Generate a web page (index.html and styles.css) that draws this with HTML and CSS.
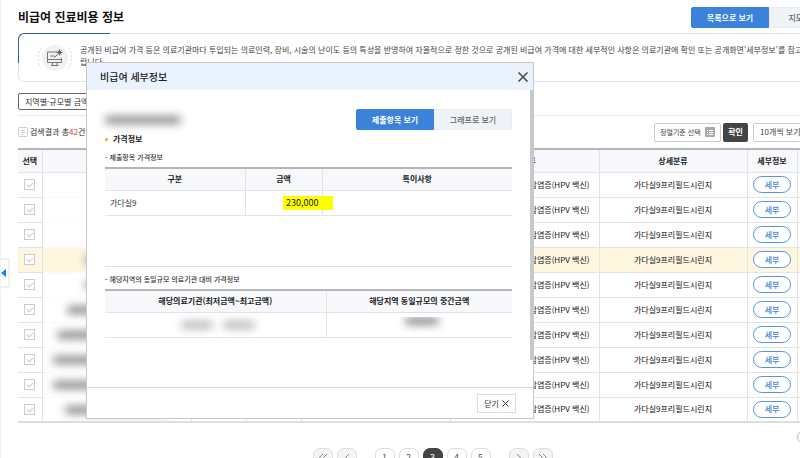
FILE: index.html
```html
<!DOCTYPE html>
<html lang="ko">
<head>
<meta charset="utf-8">
<title>비급여 진료비용 정보</title>
<link rel="stylesheet" href="styles.css">
</head>
<body>
<button class="drawer" type="button" aria-label="메뉴 열기"><svg width="5" height="8" viewBox="0 0 5 8"><path d="M5 0v8L0 4z" fill="#0a84ff"/></svg></button>
<main class="page">
  <header class="head">
    <h1>비급여 진료비용 정보</h1>
    <div class="tabs"><button class="tab on" type="button">목록으로 보기</button><button class="tab" type="button">지도로 보기</button></div>
  </header>

  <section class="notice">
    <svg class="notice-icon" width="36" height="28" viewBox="0 0 36 28" fill="none">
      <circle cx="18" cy="14" r="13" fill="#f1f1f1"/>
      <path d="M4.500 4A17 17 0 0 0 4.500 24M31.500 4A17 17 0 0 1 31.500 24" stroke="#d5d5d5" stroke-dasharray="2 2"/>
      <path d="M20 8h-9.500v10.500h14V14M11 15.500h13.500M15.500 19v2.500h4.500V19M14 21.500h7.500M13 12h5" stroke="#777"/>
      <path d="M22.500 5.500v6M19.500 8.500h6M20.500 6.500l4 4M24.500 6.500l-4 4M20.500 10.500l-3 3" stroke="#666"/>
    </svg>
    <p>공개된 비급여 가격 등은 의료기관마다 투입되는 의료인력, 장비, 시술의 난이도 등의 특성을 반영하여 자율적으로 정한 것으로 공개된 비급여 가격에 대한 세부적인 사항은 의료기관에 확인 또는 공개화면'세부정보'를 참고하시기 바<br>랍니다.</p>
  </section>

  <div class="region"><button class="region-btn" type="button">지역별·규모별 금액</button></div>

  <div class="toolbar">
    <svg width="10" height="10" viewBox="0 0 10 10" fill="none" stroke="#ccc"><rect x=".5" y=".5" width="9" height="9" rx="1"/><path d="M3 3.500h4M3 5.500h4M3 7.500h2"/></svg>
    <p class="count">검색결과 총<em>42</em>건</p>
    <label class="pick sort">
      <select aria-label="정렬기준"><option>정렬기준 선택</option></select>
      <svg width="10" height="10" viewBox="0 0 10 10"><rect width="10" height="10" rx="1" fill="#aaa"/><path d="M2 3.500h1M4 3.500h4M2 5.500h1M4 5.500h4M2 7.500h1M4 7.500h4" stroke="#fff"/></svg>
    </label>
    <button class="ok" type="button">확인</button>
    <label class="pick per"><select aria-label="페이지당 개수"><option>10개씩 보기</option></select></label>
  </div>

  <table class="list">
    <colgroup><col class="c-check"><col class="c-name"><col class="c-a"><col class="c-a"><col class="c-name"><col class="c-name"><col class="c-item"><col class="c-btn"><col></colgroup>
    <thead><tr><th>선택</th><th></th><th></th><th></th><th></th><th>중분류</th><th>상세분류</th><th>세부정보</th><th></th></tr></thead>
    <tbody id="rows"></tbody>
  </table>

  <div class="foot">
    <nav class="pager" aria-label="페이지">
      <a class="arrow" href="#" aria-label="처음"><svg width="10" height="8" viewBox="0 0 10 8"><path d="M5 0L1 4l4 4M9 0L5 4l4 4"/></svg></a>
      <a class="arrow gap" href="#" aria-label="이전"><svg width="6" height="8" viewBox="0 0 6 8"><path d="M5 0L1 4l4 4"/></svg></a>
      <a href="#">1</a><a href="#">2</a><a class="now" href="#">3</a><a href="#">4</a><a class="gap" href="#">5</a>
      <a class="arrow" href="#" aria-label="다음"><svg width="6" height="8" viewBox="0 0 6 8"><path d="M1 0l4 4-4 4"/></svg></a>
      <a class="arrow" href="#" aria-label="마지막"><svg width="10" height="8" viewBox="0 0 10 8"><path d="M1 0l4 4-4 4M5 0l4 4-4 4"/></svg></a>
    </nav>
    <button class="round" type="button" aria-label="위로"></button>
  </div>
</main>

<section class="modal" role="dialog" aria-label="비급여 세부정보">
  <header class="modal-head">
    <h2>비급여 세부정보</h2>
    <button class="x" type="button" aria-label="닫기"><svg width="10" height="10" viewBox="0 0 10 10" fill="none" stroke="#444" stroke-width="1.500"><path d="M.5.500l9 9M9.500.500l-9 9"/></svg></button>
  </header>
  <div class="modal-body">
    <div class="modal-top">
      <span class="smudge hospital"></span>
      <div class="tabs"><button class="tab on" type="button">제출항목 보기</button><button class="tab" type="button">그래프로 보기</button></div>
    </div>
    <h3>가격정보</h3>
    <h4>- 제출항목 가격정보</h4>
    <div class="price-box">
      <table class="price">
        <colgroup><col class="p-kind"><col class="p-cost"><col></colgroup>
        <thead><tr><th>구분</th><th>금액</th><th>특이사항</th></tr></thead>
        <tbody><tr><td>가다실9</td><td class="num"><mark>230,000</mark></td><td></td></tr></tbody>
      </table>
    </div>
    <h4>- 해당지역의 동일규모 의료기관 대비 가격정보</h4>
    <table class="price compare">
      <colgroup><col class="p-range"><col></colgroup>
      <thead><tr><th>해당의료기관(최저금액~최고금액)</th><th>해당지역 동일규모의 중간금액</th></tr></thead>
      <tbody><tr><td><div class="range"><span class="smudge"></span><span class="smudge"></span></div></td><td><div class="middle"><span class="smudge"></span></div></td></tr></tbody>
    </table>
  </div>
  <footer class="modal-foot"><button class="close" type="button">닫기<svg width="7" height="7" viewBox="0 0 7 7" fill="none" stroke="#333"><path d="M.5.500l6 6M6.500.500l-6 6"/></svg></button></footer>
</section>
<script src="rows.js"></script>
</body>
</html>
```
FILE: rows.js
```js
// Width of the masked hospital name in each result row
const names = [0, 0, 0, 64, 64, 100, 120, 128, 128, 104];
document.getElementById('rows').innerHTML = names.map((w, i) => `
  <tr class="${i === 3 ? 'picked' : ''}">
    <td><input type="checkbox" aria-label="${i + 1}번 선택"></td>
    <td class="masked"><span class="smudge" style="width:${w}px"></span></td>
    <td></td><td></td><td></td>
    <td class="mid">바이러스 감염증(HPV 백신)</td>
    <td>가다실9프리필드시린지</td>
    <td><button class="detail" type="button">세부</button></td>
    <td></td>
  </tr>`).join('');
```
FILE: styles.css
```css
* { box-sizing: border-box; }
html { overflow: hidden; }
body {
  margin: 0;
  min-height: 100vh;
  position: relative;
  overflow: hidden;
  border-left: 1px solid #f3f3f3;
  background: #fff;
  color: #333;
  font: 9px/12px "Noto Sans CJK KR", sans-serif;
}
button, select, input { font: inherit; color: inherit; margin: 0; padding: 0; }
h1, h2, h3, h4, p { margin: 0; }
table { width: 100%; border-collapse: collapse; table-layout: fixed; }
th, td { padding: 0; }

/* The page runs past the right edge of the window */
.page { margin: 0 -47px 0 17px; }

.drawer {
  position: absolute;
  left: -1px;
  top: 259px;
  width: 9px;
  height: 28px;
  display: flex;
  align-items: center;
  border: 1px solid #eee;
  background: #fff;
  box-shadow: 0 0 2px #ddd;
}

.head { display: flex; justify-content: space-between; padding-top: 7px; height: 33px; }
.head h1 { font-size: 12px; line-height: 20px; color: #111; }
.tabs { display: flex; }
.tab {
  width: 78px;
  height: 21px;
  border: 1px solid #e8edf1;
  border-radius: 0 2px 2px 0;
  background: #eff3f7;
  color: #666;
  font-size: 8px;
  font-weight: 500;
}
.tab.on { border-color: #3a82da; border-radius: 2px 0 0 2px; background: #3a82da; color: #fff; font-weight: 700; }

.notice {
  position: relative;
  display: flex;
  gap: 7px;
  height: 49px;
  padding: 10px 0 0 18px;
  border: 1px solid #dfe2e8;
  border-radius: 6px;
}
.notice::before {
  content: "";
  position: absolute;
  left: -1px;
  top: -1px;
  width: 91px;
  height: 29px;
  border: solid #3c5a94;
  border-width: 1px 0 0 1px;
  border-top-left-radius: 6px;
}
.notice-icon { flex: none; }
.notice p { font-size: 8px; line-height: 12px; color: #444; white-space: nowrap; }

.region { height: 34px; padding-top: 11px; border-bottom: 1px solid #e8e8e8; }
.region-btn { display: block; width: 88px; height: 17px; padding: 0 6px; border: 1px solid #667; border-radius: 2px; background: #fff; font-size: 8px; line-height: 12px; text-align: left; white-space: nowrap; }

.toolbar { display: flex; align-items: center; height: 32px; }
.count { margin: 0 auto 0 2px; font-size: 8px; }
.count em { color: #e0403c; font-style: normal; }
.pick { display: flex; align-items: center; height: 19px; border: 1px solid #ccc; border-radius: 2px; background: #fff; font-size: 8px; }
.pick select { appearance: none; border: 0; background: none; color: #444; }
.sort { width: 67px; padding: 0 5px; justify-content: space-between; font-size: 7px; }
.per { width: 94px; padding: 0 6px; }
.ok { width: 25px; height: 19px; margin: 0 5px 0 2px; border: 0; border-radius: 2px; background: #444; color: #fff; font-size: 8px; font-weight: 700; }

.list { border-top: 2px solid #b5b5b5; border-bottom: 2px solid #ddd; color: #111; font-size: 8px; }
.c-check { width: 24px; }
.c-name { width: 149px; }
.c-a { width: 55px; }
.c-item { width: 148px; }
.c-btn { width: 50px; }
.list tr { height: 25px; }
.list thead tr { height: 23px; }
.list th { background: #f6f8fb; color: #222; }
.list th, .list td { border-bottom: 1px solid #e3e3e3; border-right: 1px solid #e3e3e3; text-align: center; white-space: nowrap; overflow: hidden; }
.list .masked { border-bottom-color: #fafafa; }
.list .mid { padding-right: 9px; text-align: right; }
.list .picked td { background: #fff6df; }
.list input {
  appearance: none;
  display: block;
  width: 11px;
  height: 11px;
  margin: 0 auto;
  border: 1px solid #ccc;
  background: #fff;
}
.list input::after {
  content: "";
  display: block;
  width: 5px;
  height: 3px;
  margin: 2px;
  border: solid #ccc;
  border-width: 0 0 1px 1px;
  transform: rotate(-45deg);
}
.detail { width: 38px; height: 17px; border: 1px solid #5592e4; border-radius: 9px; background: #fff; color: #3d80dc; font-weight: 500; line-height: 12px; }

.smudge { display: inline-block; height: 8px; border-radius: 4px; background: #8c8c90; filter: blur(4px); vertical-align: middle; }

.foot { position: relative; padding-top: 25px; }
.pager { display: flex; justify-content: center; gap: 4px; }
.pager a {
  display: flex;
  align-items: center;
  justify-content: center;
  width: 20px;
  height: 20px;
  border: 1px solid #ddd;
  border-radius: 7px;
  color: #555;
  text-decoration: none;
}
.pager .arrow { background: #f5f5f5; }
.pager .now { border-color: #444; background: #444; color: #fff; }
.pager .gap { margin-right: 14px; }
.pager svg { fill: none; stroke: #888; }
.round { position: absolute; right: 36px; top: 7px; width: 14px; height: 14px; border: 1px solid #bbb; border-radius: 50%; background: #fff; }

.modal {
  position: absolute;
  left: 85px;
  top: 62px;
  width: 448px;
  border: 1px solid #c8c8c8;
  background: #fff;
}
.modal-head { display: flex; align-items: center; justify-content: space-between; height: 27px; padding: 0 5px 0 13px; background: #eaf2fe; }
.modal-head h2 { font-size: 10px; line-height: 14px; font-weight: 500; color: #222; }
.x { display: flex; border: 0; background: none; }
.modal-body { position: relative; height: 298px; padding: 19px 21px 0 18px; border-bottom: 1px solid #d8d8d8; }
.modal-body::after { content: ""; position: absolute; right: 0; top: 0; width: 3px; height: 270px; background: #c8c8c8; }
.modal-top { display: flex; align-items: center; justify-content: space-between; height: 21px; }
.hospital { width: 76px; }
.modal h3 { position: relative; margin-top: 3px; padding-left: 8px; font-size: 8px; line-height: 12px; color: #222; }
.modal h3::before { content: ""; position: absolute; left: 0; top: 5px; width: 3px; height: 3px; border-radius: 50%; background: #ffa31a; }
.modal h4 { margin-top: 6px; padding-bottom: 4px; font-size: 7px; line-height: 12px; font-weight: 500; }
.price-box { height: 100px; border-bottom: 1px solid #e0e0e0; }
.price { border-top: 2px solid #b5b5b5; font-size: 8px; }
.p-kind { width: 140px; }
.p-cost { width: 77px; }
.p-range { width: 221px; }
.price th { height: 22px; background: #f6f8fb; color: #222; }
.price td { height: 25px; padding-left: 5px; }
.price th, .price td { border-bottom: 1px solid #e3e3e3; border-right: 1px solid #e3e3e3; }
.price th:last-child, .price td:last-child { border-right: 0; }
.price .num { text-align: right; font-size: 9px; }
.price mark { display: inline-block; position: relative; padding: 1px 14px 1px 3px; margin-right: -11px; background: #ff0; color: #222; }
.range, .middle { display: flex; justify-content: center; gap: 10px; }
.range .smudge { width: 32px; opacity: .6; }
.middle .smudge { width: 34px; }
.middle { height: 16px; overflow: hidden; }
.modal-foot { display: flex; justify-content: flex-end; padding: 6px 17px 5px; }
.close { display: flex; align-items: center; justify-content: center; gap: 3px; width: 39px; height: 19px; border: 1px solid #ddd; background: #fff; font-size: 8px; }
```
